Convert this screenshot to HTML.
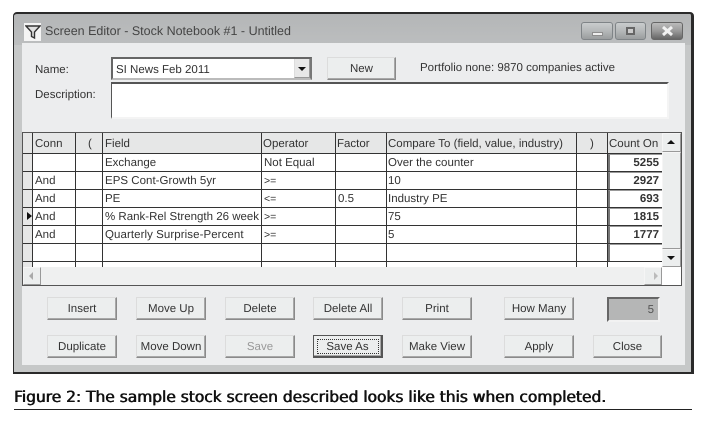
<!DOCTYPE html>
<html><head><meta charset="utf-8"><style>
html,body{margin:0;padding:0;background:#fff;width:712px;height:435px;overflow:hidden}
#p{position:absolute;left:0;top:0;width:712px;height:435px;filter:blur(.35px);font-family:"Liberation Sans",sans-serif;color:#333;font-size:11.5px;text-rendering:geometricPrecision}
#p div{position:absolute;box-sizing:border-box}
.t{white-space:nowrap;line-height:14px;height:14px}
.b{background:#eceeee;border:1px solid;border-color:#dcdcdc #8a8a8a #8a8a8a #dcdcdc;box-shadow:inset -1px -1px 0 #a8a8a8;text-align:center;line-height:22px;height:23px;width:70px;white-space:nowrap}
.vl{background:#333;width:1px;top:133px;height:134px}
.hl{background:#333;height:1px;left:23px;width:639px}
.hc{background:#e6e7e7;top:133px;height:20px}
.lc{background:#e6e7e7;left:23px;width:9px}
.cnt{left:608px;width:54px;height:17px;background:#fff;border-left:2px solid #777;border-top:1px solid #999;font-weight:bold;text-align:right;padding-right:3px;line-height:17px;color:#333}
.wb{top:22px;height:18px;border:1px solid #7f8487;border-radius:3px;background:linear-gradient(#c9cccd,#b5b8b9 50%,#9a9d9e)}
.sb{background:#eceeee;border:1px solid;border-color:#f5f5f5 #999 #999 #f5f5f5}
</style></head><body><div id="p">

<div style="left:13px;top:12px;width:681px;height:362px;background:linear-gradient(#b4b6b7,#bcbebf 31px,#c6c8c8 31px);border:1px solid #2a2a2a;border-width:2px 3px 2px 1px;border-radius:4px 4px 0 0"></div>
<div style="left:22px;top:43px;width:663px;height:322px;background:#ecedee"></div>

<div style="left:24px;top:23px;width:17px;height:18px;background:#f4f4f4"></div>
<svg style="position:absolute;left:25px;top:24px" width="16" height="16" viewBox="0 0 16 16"><path d="M1 2H15L9.5 8V14L6.5 12.5V8Z" fill="#e0e0e0" stroke="#333" stroke-width="1.4"/></svg>
<div class="t" style="left:45px;top:24px;font-size:12.5px;color:#444">Screen Editor - Stock Notebook #1 - Untitled</div>

<div class="wb" style="left:581px;width:32px"></div>
<div style="left:592px;top:32px;width:11px;height:4px;background:#eee;border:1px solid #8d8d8d"></div>
<div class="wb" style="left:615px;width:31px"></div>
<div style="left:626px;top:27px;width:9px;height:8px;border:2px solid #666;background:#ccc"></div>
<div class="wb" style="left:651px;width:32px;background:linear-gradient(#bbb,#999 50%,#666);border-color:#666"></div>
<svg style="position:absolute;left:661px;top:25px" width="13" height="12"><path d="M2 2L11 10M11 2L2 10" stroke="#f2f2f2" stroke-width="3"/></svg>

<div class="t" style="left:35px;top:63px">Name:</div>
<div class="t" style="left:35px;top:88px">Description:</div>

<div style="left:111px;top:57px;width:201px;height:23px;background:#fff;border:2px solid;border-color:#666 #777 #bbb #666"></div>
<div class="t" style="left:116px;top:63px">SI News Feb 2011</div>
<div style="left:294px;top:59px;width:16px;height:19px;background:#e8e8e8;border-left:1px solid #ddd;border-right:1px solid #999;border-bottom:1px solid #999"></div>
<div style="left:298px;top:67px;border-left:4px solid transparent;border-right:4px solid transparent;border-top:4px solid #111;width:0;height:0"></div>

<div class="b" style="left:327px;top:57px;width:69px">New</div>
<div class="t" style="left:420px;top:61px">Portfolio none: 9870 companies active</div>

<div style="left:111px;top:82px;width:558px;height:37px;background:#fff;border:2px solid;border-color:#555 #f4f4f4 #f4f4f4 #555;border-left-width:1px"></div>

<!-- grid -->
<div style="left:22px;top:132px;width:660px;height:154px;background:#fff;border:1px solid #555"></div>
<div class="hc" style="left:23px;width:639px"></div>
<div class="lc" style="top:153px;height:114px"></div>

<div class="vl" style="left:32px"></div><div class="vl" style="left:75px"></div><div class="vl" style="left:102px"></div><div class="vl" style="left:261px"></div><div class="vl" style="left:335px"></div><div class="vl" style="left:386px"></div><div class="vl" style="left:576px"></div><div class="vl" style="left:607px"></div>
<div class="hl" style="top:153px"></div><div class="hl" style="top:171px"></div><div class="hl" style="top:189px"></div><div class="hl" style="top:207px"></div><div class="hl" style="top:225px"></div><div class="hl" style="top:243px"></div><div class="hl" style="top:261px"></div>

<div class="t" style="left:35px;top:137px">Conn</div>
<div class="t" style="left:88px;top:137px">(</div>
<div class="t" style="left:105px;top:137px">Field</div>
<div class="t" style="left:263px;top:137px">Operator</div>
<div class="t" style="left:337px;top:137px">Factor</div>
<div class="t" style="left:388px;top:137px">Compare To (field, value, industry)</div>
<div class="t" style="left:590px;top:137px">)</div>
<div class="t" style="left:609px;top:137px">Count On</div>

<div class="t" style="left:105px;top:156px">Exchange</div>
<div class="t" style="left:264px;top:156px">Not Equal</div>
<div class="t" style="left:388px;top:156px">Over the counter</div>

<div class="t" style="left:35px;top:174px">And</div>
<div class="t" style="left:105px;top:174px;letter-spacing:.02px">EPS Cont-Growth 5yr</div>
<div class="t" style="left:264px;top:174px;font-size:10.5px">&gt;=</div>
<div class="t" style="left:388px;top:174px">10</div>

<div class="t" style="left:35px;top:192px">And</div>
<div class="t" style="left:105px;top:192px">PE</div>
<div class="t" style="left:264px;top:192px;font-size:10.5px">&lt;=</div>
<div class="t" style="left:338px;top:192px">0.5</div>
<div class="t" style="left:388px;top:192px">Industry PE</div>

<div class="t" style="left:35px;top:210px">And</div>
<div class="t" style="left:105px;top:210px">% Rank-Rel Strength 26 week</div>
<div class="t" style="left:264px;top:210px;font-size:10.5px">&gt;=</div>
<div class="t" style="left:388px;top:210px">75</div>
<div style="left:27px;top:212px;border-left:5px solid #111;border-top:4px solid transparent;border-bottom:4px solid transparent;width:0;height:0"></div>

<div class="t" style="left:35px;top:228px">And</div>
<div class="t" style="left:105px;top:228px;letter-spacing:.07px">Quarterly Surprise-Percent</div>
<div class="t" style="left:264px;top:228px;font-size:10.5px">&gt;=</div>
<div class="t" style="left:388px;top:228px">5</div>

<div class="cnt" style="top:154px">5255</div>
<div class="cnt" style="top:172px">2927</div>
<div class="cnt" style="top:190px">693</div>
<div class="cnt" style="top:208px">1815</div>
<div class="cnt" style="top:226px">1777</div>
<div class="cnt" style="top:244px;height:17px"></div>

<!-- v scroll -->
<div style="left:662px;top:133px;width:19px;height:134px;background:#c4c6c6"></div>
<div class="sb" style="left:662px;top:133px;width:19px;height:19px"></div>
<div style="left:667px;top:140px;border-left:4px solid transparent;border-right:4px solid transparent;border-bottom:4px solid #111;width:0;height:0"></div>
<div class="sb" style="left:662px;top:152px;width:19px;height:97px"></div>
<div class="sb" style="left:662px;top:249px;width:19px;height:18px"></div>
<div style="left:667px;top:256px;border-left:4px solid transparent;border-right:4px solid transparent;border-top:4px solid #111;width:0;height:0"></div>

<!-- h scroll -->
<div style="left:23px;top:267px;width:639px;height:18px;background:#eff0f0"></div>
<div class="sb" style="left:23px;top:267px;width:18px;height:18px"></div>
<div style="left:29px;top:272px;border-right:4px solid #aaa;border-top:4px solid transparent;border-bottom:4px solid transparent;width:0;height:0"></div>
<div class="sb" style="left:644px;top:267px;width:18px;height:18px"></div>
<div style="left:654px;top:272px;border-left:4px solid #bbb;border-top:4px solid transparent;border-bottom:4px solid transparent;width:0;height:0"></div>

<!-- buttons -->
<div class="b" style="left:47px;top:297px">Insert</div>
<div class="b" style="left:136px;top:297px">Move Up</div>
<div class="b" style="left:225px;top:297px">Delete</div>
<div class="b" style="left:313px;top:297px">Delete All</div>
<div class="b" style="left:402px;top:297px">Print</div>
<div class="b" style="left:504px;top:297px">How Many</div>
<div style="left:607px;top:297px;width:53px;height:25px;background:#b5b6b6;border:2px solid;border-color:#666 #f2f2f2 #f2f2f2 #666;text-align:right;padding-right:4px;line-height:22px;color:#555">5</div>

<div class="b" style="left:47px;top:335px">Duplicate</div>
<div class="b" style="left:136px;top:335px">Move Down</div>
<div class="b" style="left:225px;top:335px;color:#999">Save</div>
<div class="b" style="left:313px;top:335px;border-color:#555;border-width:1px 2px 2px 1px">Save As</div>
<div style="left:317px;top:339px;width:62px;height:15px;border:1px dotted #333"></div>
<div class="b" style="left:402px;top:335px">Make View</div>
<div class="b" style="left:504px;top:335px">Apply</div>
<div class="b" style="left:593px;top:335px;width:69px">Close</div>

<!-- caption -->
<div class="t" style="left:14px;top:389px;height:16px;line-height:16px;font-family:'DejaVu Sans',sans-serif;font-size:15.45px;text-shadow:.5px 0 0 #111,-.2px 0 0 #111;color:#111">Figure 2: The sample stock screen described looks like this when completed.</div>
<div style="left:14px;top:409px;width:678px;height:1px;background:#222"></div>
</div></body></html>
